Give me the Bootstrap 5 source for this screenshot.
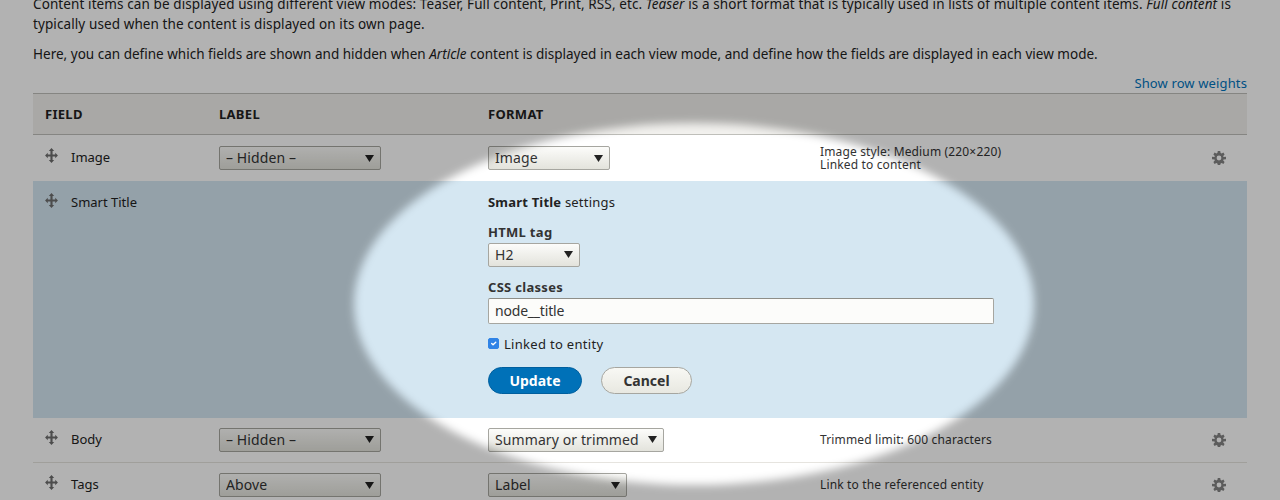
<!DOCTYPE html>
<html lang="en">
<head>
<meta charset="utf-8">
<title>Manage display</title>
<link href="https://cdn.jsdelivr.net/npm/bootstrap@5.3.0/dist/css/bootstrap.min.css" rel="stylesheet">
<style>
html,body{height:500px;overflow:hidden}
body{background:#fff;color:#222;font-family:"Noto Sans","DejaVu Sans",sans-serif;font-size:13px;line-height:20px}
.pagewrap{padding:0 33px;position:relative}
.lede{font-size:13.500px;letter-spacing:.012px}
.intro{margin:-6px 0 10px;letter-spacing:.1px}
.weights{height:29px;padding-top:9px;line-height:20px;letter-spacing:.13px}
.weights a{color:#0074bd;text-decoration:none}
.fieldtable{width:100%;table-layout:fixed;border-collapse:collapse}
.fieldtable th{background:#f2f1ee;border-top:1px solid #bfbfba;border-bottom:1px solid #bfbfba;height:41px;padding:0 12px;font-weight:700;font-size:13px;letter-spacing:.3px;text-transform:uppercase}
.fieldtable td{padding:0 12px;vertical-align:top;border-bottom:1px solid #e6e4df}
.rowtall{height:46px}
.rowplain{height:45px}
.rowopen td{background:#d5e7f2;border-bottom:0;height:237px}
.name{display:flex;align-items:center;gap:13px;padding-top:11px;height:31px}
.nametop{padding-top:12px;height:32px}
.grip{width:13px;height:15px;flex:none;margin-top:-3px}
.dd.form-select{display:block;height:24px;padding:0 20px 0 6px;font-size:14px;line-height:22px;color:#333;border:1px solid #a6a6a0;border-radius:2px;letter-spacing:.1px;background-color:#f2f1eb;background-image:url("data:image/svg+xml,%3Csvg xmlns='http://www.w3.org/2000/svg' width='9' height='7'%3E%3Cpath d='M0 0h9L4.500 7z' fill='%23222'/%3E%3C/svg%3E"),linear-gradient(#fcfcfa,#e3e3dc);background-position:right 6px center,0 0;background-size:9px 7px,100% 100%;background-repeat:no-repeat}
.cellsel{padding-top:10px!important}
.celltop{padding-top:11px!important}
.w-hid{width:162px}
.w-img{width:122px}
.w-sum{width:176px}
.w-lab{width:139px}
.w-h2{width:92px}
.summary{font-size:12px;line-height:13px;letter-spacing:.15px;padding-top:10px!important;color:#333}
.summary.one{padding-top:15px!important}
.cog{display:block;width:14px;height:14px;margin:15px 0 0 auto}
.cogtop{margin-top:16px}
.cogcell{padding:0 21px 0 0!important}
.setform{padding-top:11px!important}
.settitle{height:20px;line-height:20px;letter-spacing:.2px}
.fieldlabel{display:block;font-weight:700;line-height:20px;margin:0;color:#333;letter-spacing:.3px}
.labelone{margin-top:10px;height:21px}
.labeltwo{margin-top:10px;height:21px}
.textbox.form-control{width:506px;height:26px;min-height:0;padding:0 6px;font-size:14px;color:#333;background:#fcfcfa;border:1px solid #a6a6a0;border-top-color:#8e8e88;border-radius:2px;letter-spacing:-.2px}
.checkline{margin-top:10px;height:20px;line-height:20px;gap:5px;letter-spacing:.3px}
.checkline .form-check-input{width:11px;height:11px;margin:0;border-radius:2px;background-color:#2f83e6;border-color:#2f83e6;flex:none}
.actions{margin-top:13px}
.pillbtn.btn{height:27px;padding:0;line-height:25px;border-radius:14px;font-size:14px;font-weight:700}
.save.btn{width:94px;background:#0071b8;border:1px solid #005f9e;color:#fff}
.quit.btn{width:91px;background:linear-gradient(#f8f8f4,#e8e8e1);border:1px solid #a6a6a0;color:#333;margin-left:19px}
.spot{position:absolute;left:354px;top:123px;width:680px;height:362px;border-radius:50%;pointer-events:none;box-shadow:0 0 0 1600px rgba(0,0,0,.3);filter:blur(4px)}
</style>
</head>
<body>
<div class="pagewrap">
  <p class="lede intro">Content items can be displayed using different view modes: Teaser, Full content, Print, RSS, etc. <em>Teaser</em> is a short format that is typically used in lists of multiple content items. <em>Full content</em> is typically used when the content is displayed on its own page.</p>
  <p class="m-0 lede">Here, you can define which fields are shown and hidden when <em>Article</em> content is displayed in each view mode, and define how the fields are displayed in each view mode.</p>
  <div class="weights text-end"><a href="#">Show row weights</a></div>
  <table class="fieldtable">
    <colgroup><col style="width:174px"><col style="width:269px"><col style="width:332px"><col><col style="width:56px"></colgroup>
    <thead><tr><th>Field</th><th>Label</th><th>Format</th><th></th><th></th></tr></thead>
    <tbody>
      <tr class="rowtall">
        <td class="border-0"><div class="name nametop"><svg class="grip" viewBox="0 0 12 14"><use href="#mv"/></svg>Image</div></td>
        <td class="celltop border-0"><select class="form-select dd w-hid"><option>– Hidden –</option></select></td>
        <td class="celltop border-0"><select class="form-select dd w-img"><option>Image</option></select></td>
        <td class="summary border-0">Image style: Medium (220×220)<br>Linked to content</td>
        <td class="cogcell border-0"><svg class="cog cogtop" viewBox="0 0 14 14"><use href="#gr"/></svg></td>
      </tr>
      <tr class="rowopen">
        <td><div class="name"><svg class="grip" viewBox="0 0 12 14"><use href="#mv"/></svg>Smart Title</div></td>
        <td></td>
        <td colspan="3" class="setform">
          <div class="settitle"><strong>Smart Title</strong> settings</div>
          <label class="fieldlabel labelone">HTML tag</label>
          <select class="form-select dd w-h2"><option>H2</option></select>
          <label class="fieldlabel labeltwo">CSS classes</label>
          <input class="form-control textbox" type="text" value="node__title">
          <div class="checkline d-flex align-items-center"><input class="form-check-input" type="checkbox" checked><span>Linked to entity</span></div>
          <div class="actions d-flex"><button class="btn pillbtn save">Update</button><button class="btn pillbtn quit">Cancel</button></div>
        </td>
      </tr>
      <tr class="rowplain">
        <td><div class="name"><svg class="grip" viewBox="0 0 12 14"><use href="#mv"/></svg>Body</div></td>
        <td class="cellsel"><select class="form-select dd w-hid"><option>– Hidden –</option></select></td>
        <td class="cellsel"><select class="form-select dd w-sum"><option>Summary or trimmed</option></select></td>
        <td class="summary one">Trimmed limit: 600 characters</td>
        <td class="cogcell"><svg class="cog" viewBox="0 0 14 14"><use href="#gr"/></svg></td>
      </tr>
      <tr class="rowplain">
        <td class="border-0"><div class="name"><svg class="grip" viewBox="0 0 12 14"><use href="#mv"/></svg>Tags</div></td>
        <td class="cellsel border-0"><select class="form-select dd w-hid"><option>Above</option></select></td>
        <td class="cellsel border-0"><select class="form-select dd w-lab"><option>Label</option></select></td>
        <td class="summary one border-0">Link to the referenced entity</td>
        <td class="cogcell border-0"><svg class="cog" viewBox="0 0 14 14"><use href="#gr"/></svg></td>
      </tr>
    </tbody>
  </table>
</div>
<div class="spot"></div>
<svg width="0" height="0" class="position-absolute">
  <defs>
    <g id="mv" fill="#6e6e6e"><path d="M6 0l2.500 2.800H7V6H9.500V4.500L12 7 9.500 9.500V8H7v3.200H8.500L6 14 3.500 11.200H5V8H2.500V9.500L0 7 2.500 4.500V6H5V2.800H3.500z"/></g>
    <g id="gr" fill="#848484"><path fill-rule="evenodd" d="M5.800 0h2.400l.4 2 1.100.5L11.400 1.400 12.600 3.400 11.200 4.900l.3 1.100L14 5.800v2.400l-2.500.2-.3 1.100 1.400 1.500-1.200 2-1.700-1.100-1.100.5-.4 1.600H5.800l-.4-1.600-1.100-.5-1.700 1.100-1.200-2L2.800 9.500 2.500 8.400 0 8.200V5.800l2.500.2.300-1.100L1.400 3.400 2.600 1.400 4.300 2.500 5.400 2zM7 4.600A2.400 2.400 0 1 0 7 9.400 2.400 2.400 0 0 0 7 4.600z"/></g>
  </defs>
</svg>
</body>
</html>
